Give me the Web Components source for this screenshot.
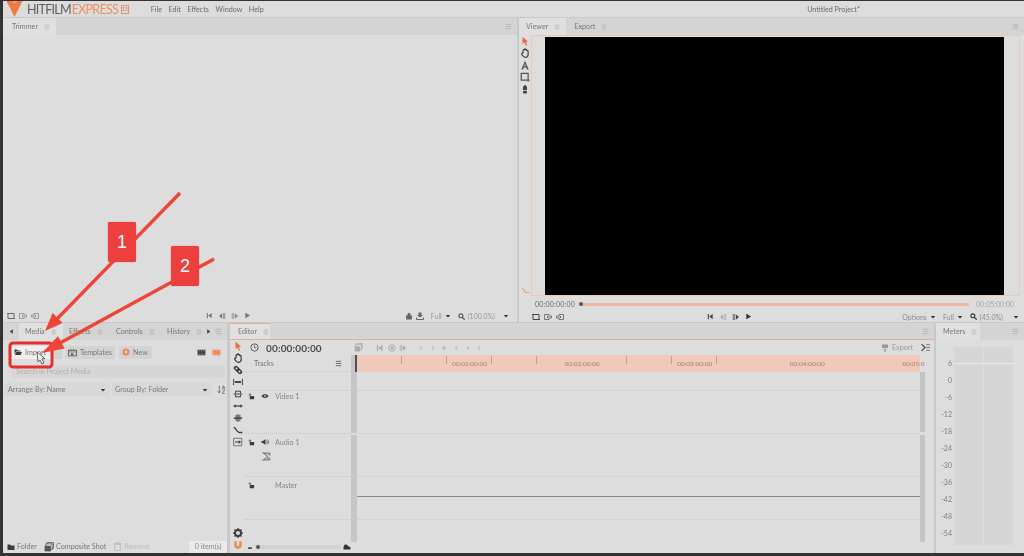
<!DOCTYPE html>
<html>
<head>
<meta charset="utf-8">
<title>HitFilm Express</title>
<style>
    html, body { margin: 0; height: 100%; overflow: hidden; background: #2b2b2b; }
    body { font-family: "Lato", "Liberation Sans", sans-serif; font-size: 7.2px; color: #6f6f6f; }
</style>
</head>
<body>

<hf-app>
    <hf-titlebar slot="title"></hf-titlebar>

    <!-- Upper row -->
    <hf-panel slot="trimmer" style="width:514px">
        <hf-tab slot="tabs" active label="Trimmer" style="padding:0 6px 0 9px"></hf-tab>
        <hf-trimmer></hf-trimmer>
    </hf-panel>
    <hf-panel slot="viewer" style="flex:1">
        <hf-tab slot="tabs" active label="Viewer" style="padding:0 6px 0 7px"></hf-tab>
        <hf-tab slot="tabs" label="Export"></hf-tab>
        <hf-viewer></hf-viewer>
    </hf-panel>

    <!-- Lower row -->
    <hf-panel slot="media" style="width:224px">
        <hf-icon slot="tabs" name="left" size="7" style="margin:0 4px 0 5px"></hf-icon>
        <hf-tab slot="tabs" active label="Media" w="44" style="padding:0 6px"></hf-tab>
        <hf-tab slot="tabs" label="Effects" w="47" style="padding:0 6px"></hf-tab>
        <hf-tab slot="tabs" label="Controls" w="51" style="padding:0 6px"></hf-tab>
        <hf-tab slot="tabs" label="History" w="44" style="padding:0 6px"></hf-tab>
        <hf-icon slot="tabs" name="right" size="7"></hf-icon>
        <hf-media></hf-media>
    </hf-panel>
    <hf-panel slot="editor" style="width:704px" accent>
        <hf-tab slot="tabs" active accent label="Editor" w="40"></hf-tab>
        <hf-editor></hf-editor>
    </hf-panel>
    <hf-panel slot="meters" style="flex:1">
        <hf-tab slot="tabs" active label="Meters" w="44" style="padding:0 7px"></hf-tab>
        <hf-meters></hf-meters>
    </hf-panel>
</hf-app>

<hf-callouts></hf-callouts>

<script>
// Icon shapes, all on a 16x16 box
const ICONS = {
    menu: `<path d="M2 3h12M2 8h12M2 13h12" stroke="currentColor" stroke-width="1.6" fill="none"/>`,
    left: `<path d="M11 3v10L4 8z"/>`,
    right: `<path d="M5 3v10l7-5z"/>`,
    down: `<path d="M2 5h12L8 12z"/>`,
    cursor: `<path d="M4 1l9 8-4 .5 2.500 5-2 1-2.500-5L4 13z"/>`,
    hand: `<path d="M5 7V3.500a1 1 0 012 0V2.500a1 1 0 012 0v1a1 1 0 012 0V5a1 1 0 012 0v5c0 3-2 5-4.500 5S5 13.500 3 10.500C2 9 3 8 4 8.500z" fill="none" stroke="currentColor" stroke-width="1.900"/>`,
    razor: `<g transform="rotate(-45 8 8)"><rect x="4.500" y="0" width="7" height="16" rx="3.500"/><rect x="6.800" y="3" width="2.400" height="3" fill="#ddd"/><rect x="6.800" y="10" width="2.400" height="3" fill="#ddd"/></g>`,
    slip: `<path d="M1 3v10M15 3v10" stroke="currentColor" stroke-width="1.500"/><path d="M3 6.500h10v3H3z"/>`,
    slide: `<path d="M1 8h14" stroke="currentColor" stroke-width="1.500"/><path d="M4 7V3.500h8V7M4 9v3.500h8V9" fill="none" stroke="currentColor" stroke-width="1.500"/>`,
    ripple: `<path d="M1 8h14" stroke="currentColor" stroke-width="2"/><path d="M1 8l3-3v6zM15 8l-3-3v6z"/>`,
    roll: `<path d="M1 8h14M8 2v12" stroke="currentColor" stroke-width="2"/><path d="M5 3v10M11 3v10" stroke="currentColor" stroke-width="1.500"/>`,
    rate: `<path d="M1 4c5 0 4 8 9 8h5" fill="none" stroke="currentColor" stroke-width="2.200"/>`,
    insert: `<path d="M1 2h13v12H1z" fill="none" stroke="currentColor" stroke-width="1"/><path d="M3 8h7" stroke="currentColor" stroke-width="1.600"/><path d="M9 5l4 3-4 3z"/>`,
    gear: `<circle cx="8" cy="8" r="4.800" fill="none" stroke="currentColor" stroke-width="3"/><path d="M8 0v3M8 13v3M0 8h3M13 8h3M2.300 2.300l2 2M11.700 11.700l2 2M13.700 2.300l-2 2M4.300 11.700l-2 2" stroke="currentColor" stroke-width="2"/>`,
    magnet: `<path d="M2 2h4v6a2 2 0 004 0V2h4v6a6 6 0 01-12 0z"/>`,
    clock: `<circle cx="8" cy="8" r="6.500" fill="none" stroke="currentColor" stroke-width="1.600"/><path d="M8 4v4.500h3.500" fill="none" stroke="currentColor" stroke-width="1.400"/>`,
    lock: `<path d="M2 1.500h5v5H5.500V3h-2v3.500H2z"/><rect x="4" y="7" width="10" height="7.500" rx="1"/>`,
    eye: `<path d="M1 8c3-5 11-5 14 0-3 5-11 5-14 0z"/><circle cx="8" cy="8" r="2" fill="#ddd"/><circle cx="8" cy="8" r="1"/>`,
    speaker: `<path d="M1 6h3l5-4v12l-5-4H1z"/><path d="M11 5c1.500 1.500 1.500 4.500 0 6M13 3c2.500 2.500 2.500 7.500 0 10" fill="none" stroke="currentColor" stroke-width="1.300"/>`,
    audiofx: `<path d="M1 2h14M1 14h14M3 2l7 6-7 6M9 11h6M11 5h4" fill="none" stroke="currentColor" stroke-width="1.300"/>`,
    folder: `<path d="M1 3h5l1.500 2H15v9H1z"/>`,
    folderopen: `<path d="M1 3h5l1.500 2H13v2H4L1 13z"/><path d="M4.500 8H16l-3 6H1.800z"/>`,
    loop: `<path d="M2 3h12v10H2z" fill="none" stroke="currentColor" stroke-width="2"/><path d="M0 3h4M12 13h4" stroke="currentColor" stroke-width="2"/>`,
    markin: `<path d="M1 3h9v3h5v4h-5v3H1z" fill="none" stroke="currentColor" stroke-width="1.300"/><path d="M6 6l4 2-4 2z"/>`,
    markout: `<path d="M15 3H6v3H1v4h5v3h9z" fill="none" stroke="currentColor" stroke-width="1.300"/><path d="M10 6L6 8l4 2z"/>`,
    first: `<path d="M3 2v12" stroke="currentColor" stroke-width="2.500"/><path d="M13 2v12L5 8z"/>`,
    prev: `<path d="M8 3v10L2 8z"/><path d="M10.500 2v12M13.500 2v12" stroke="currentColor" stroke-width="1.500"/>`,
    next: `<path d="M8 3v10l6-5z"/><path d="M2.500 2v12M5.500 2v12" stroke="currentColor" stroke-width="1.500"/>`,
    play: `<path d="M3 1.500v13L14 8z"/>`,
    search: `<circle cx="6.500" cy="6.500" r="4.500" fill="none" stroke="currentColor" stroke-width="2.500"/><path d="M10 10l5 5" stroke="currentColor" stroke-width="3"/>`,
    nodes: `<path d="M8 1l3 3v3h3v8H2V7h3V4z"/>`,
    snapshot: `<path d="M5 7V2h6v5h3l-6 5-6-5z" transform="translate(0 -1)"/><path d="M1 11v4h14v-4" fill="none" stroke="currentColor" stroke-width="2"/>`,
    zoomsmall: `<path d="M3 9h10v4H3z"/>`,
    zoombig: `<path d="M1 8c2-5 3-5 5-5s3 2 4 3 5 1 5 4v3H1z"/>`,
    templates: `<rect x="1" y="4" width="14" height="10" fill="none" stroke="currentColor" stroke-width="1.500"/><path d="M4 1l2 3M9 1l2 3M1 7h14M6 9l4 2-4 2z" stroke="currentColor" fill="currentColor"/>`,
    newitem: `<circle cx="8" cy="8" r="7"/><path d="M9.500 4L5 8l4.500 4z" fill="#e8e8e8"/>`,
    film: `<rect x="1" y="3" width="14" height="10"/><path d="M3 5h2M7 5h2M11 5h2M3 11h2M7 11h2M11 11h2" stroke="#ddd" stroke-width="1"/>`,
    sort: `<path d="M4 1v13M1.500 11L4 14l2.500-3" fill="none" stroke="currentColor" stroke-width="1.300"/><path d="M9 7l2.500-6L14 7M10 5h3M9 9h5l-5 6h5" fill="none" stroke="currentColor" stroke-width="1.100"/>`,
    composite: `<rect x="5" y="1" width="10" height="9" fill="none" stroke="currentColor" stroke-width="1.300"/><rect x="3" y="3" width="10" height="9" fill="#ddd" stroke="currentColor" stroke-width="1.300"/><rect x="1" y="6" width="10" height="9"/>`,
    trash: `<path d="M3 4h10v11H3zM1 3h14M6 1h4" fill="none" stroke="currentColor" stroke-width="1.300"/>`,
    record: `<circle cx="8" cy="8" r="6.500" fill="none" stroke="currentColor" stroke-width="1.800"/><circle cx="8" cy="8" r="3"/>`,
    export: `<path d="M2 1h12v7H2z"/><path d="M8 8v7M5 11l3 4 3-4" fill="none" stroke="currentColor" stroke-width="1.600"/>`,
    expand: `<path d="M1 2l6 6-6 6" fill="none" stroke="currentColor" stroke-width="2.500"/><path d="M9 3h7M9 8h7M9 13h7" stroke="currentColor" stroke-width="1.300"/>`,
    text: `<path d="M8 1L2 15h3l1-3h4l1 3h3zM8 6l1.300 4H6.700z" fill-rule="evenodd"/>`,
    mask: `<path d="M2 2h11v11H2z" fill="none" stroke="currentColor" stroke-width="2"/><path d="M12 12h3v3h-3z"/>`,
    pen: `<path d="M8 1c3 2 4 5 3 9H5C4 6 5 3 8 1zM5 11h6v4H5z"/>`,
    diamond: `<path d="M8 2l6 6-6 6-6-6z"/>`,
    bar: `<path d="M6 4h4v8H6z"/>`
};

// Small wrapper so icons can be dropped in anywhere by name
class HfIcon extends HTMLElement {
    connectedCallback() {
        const size = this.getAttribute("size") || 9;
        const color = this.getAttribute("color") || "#3c3c3c";
        if (!this.shadowRoot) this.attachShadow({mode: "open"});
        this.shadowRoot.innerHTML = `
            <style>
                :host { display: inline-flex; flex: none; width: ${size}px; height: ${size}px; color: ${color}; }
                svg { width: 100%; height: 100%; fill: currentColor; display: block; }
            </style>
            <svg viewBox="0 0 16 16">${ICONS[this.getAttribute("name")] || ""}</svg>`;
    }
}
customElements.define("hf-icon", HfIcon);


const appTemplate = document.createElement("template");
appTemplate.innerHTML = `
<style>
    :host { display: flex; flex-direction: column; width: 1024px; height: 556px; box-sizing: border-box;
            padding: 1px 0 3px 3px; background: #c9c9c9; position: relative;
            filter: blur(.45px); box-shadow: inset 3px 0 0 #333, inset 0 -3px 0 #333, inset 0 1px 0 #333; }
    .upper { display: flex; height: 304px; gap: 2px; margin-top: 1px; }
    .lower { display: flex; flex: 1; gap: 3px; margin-top: 1px; min-height: 0; }
    ::slotted([slot="meters"]) { margin-left: -1px; }
</style>
<slot name="title"></slot>
<div class="upper"><slot name="trimmer"></slot><slot name="viewer"></slot></div>
<div class="lower"><slot name="media"></slot><slot name="editor"></slot><slot name="meters"></slot></div>
`;

class HfApp extends HTMLElement {
    constructor() {
        super();
        this.attachShadow({mode: "open"});
        this.shadowRoot.appendChild(appTemplate.content.cloneNode(true));
    }
}
customElements.define("hf-app", HfApp);


const titleTemplate = document.createElement("template");
titleTemplate.innerHTML = `
<style>
    :host { display: flex; align-items: center; height: 16px; background: #dcdcdc; color: #6a6a6a; font-size: 7.2px; }
    svg { width: 17px; height: 16px; margin-left: 3px; flex: none; }
    .brand { font-size: 12.500px; letter-spacing: -.75px; margin-left: 4px; color: #5e5e5e; white-space: nowrap; }
    .brand b { font-weight: 400; color: #ed9163; margin-left: 1px; }
    .ver { border: 1px solid #ed9163; color: #c4794f; font-size: 5px; padding: 0; margin-left: 3px; line-height: 7px; }
    nav { display: flex; gap: 6.500px; margin-left: 22px; }
    .project { margin-left: auto; margin-right: 164px; }
</style>
<svg viewBox="0 0 16 16"><path d="M0 0h16L8 16z" fill="#ee7b3f"/><path d="M5.500 0h5L8 3z" fill="#f3a173"/></svg>
<span class="brand">HITFILM<b>EXPRESS</b></span><span class="ver">15</span>
<nav><span>File</span><span>Edit</span><span>Effects</span><span>Window</span><span>Help</span></nav>
<span class="project">Untitled Project*</span>
`;

class HfTitlebar extends HTMLElement {
    constructor() {
        super();
        this.attachShadow({mode: "open"});
        this.shadowRoot.appendChild(titleTemplate.content.cloneNode(true));
    }
}
customElements.define("hf-titlebar", HfTitlebar);


const panelTemplate = document.createElement("template");
panelTemplate.innerHTML = `
<style>
    :host { display: flex; flex-direction: column; background: #dddddd; min-width: 0; }
    .tabs { display: flex; align-items: center; height: 17px; flex: none; padding-right: 5px; box-sizing: border-box;
            background: #d4d4d4 radial-gradient(#cbcbcb 30%, transparent 35%) 0 0 / 2px 2px; }
    :host([accent]) .tabs { border-bottom: 1px solid #eeaa8c; }
    .end { margin-left: auto; }
    .body { flex: 1; display: flex; min-height: 0; }
    ::slotted(:not([slot])) { flex: 1; min-width: 0; }
</style>
<div class="tabs"><slot name="tabs"></slot><hf-icon class="end" name="menu" size="7" color="#a9a9a9"></hf-icon></div>
<div class="body"><slot></slot></div>
`;

class HfPanel extends HTMLElement {
    constructor() {
        super();
        this.attachShadow({mode: "open"});
        this.shadowRoot.appendChild(panelTemplate.content.cloneNode(true));
    }
}
customElements.define("hf-panel", HfPanel);


class HfTab extends HTMLElement {
    connectedCallback() {
        const width = this.getAttribute("w");
        const label = this.getAttribute("label");
        if (!this.shadowRoot) this.attachShadow({mode: "open"});
        this.shadowRoot.innerHTML = `
            <style>
                :host { display: flex; align-items: center; gap: 6px; height: 100%; box-sizing: border-box; flex: none;
                        padding: 0 8px; color: #777; font-size: 7.2px; ${width ? `width:${width}px;` : ""} }
                :host([active]) { background: #e0e0e0; }
                :host([accent]) { border-top: 1px solid #eeaa8c; }
            </style>
            ${label}<hf-icon name="menu" size="6" color="#a9a9a9"></hf-icon>`;
    }
}
customElements.define("hf-tab", HfTab);


const trimmerTemplate = document.createElement("template");
trimmerTemplate.innerHTML = `
<style>
    :host { display: flex; flex-direction: column; justify-content: flex-end; }
    .controls { display: flex; align-items: center; height: 12px; padding: 0 8px 0 4px; color: #9a9a9a; font-size: 7px; }
    .left { display: flex; gap: 4px; width: 199px; }
    .mid { display: flex; gap: 5px; }
    .right { display: flex; align-items: center; gap: 3px; margin-left: auto; }
    .s { margin-right: 4px; }
</style>
<div class="controls">
    <div class="left">
        <hf-icon name="loop" size="8" color="#666"></hf-icon>
        <hf-icon name="markin" size="8" color="#777"></hf-icon>
        <hf-icon name="markout" size="8" color="#777"></hf-icon>
    </div>
    <div class="mid">
        <hf-icon name="first" size="7" color="#777"></hf-icon>
        <hf-icon name="prev" size="8" color="#777"></hf-icon>
        <hf-icon name="next" size="8" color="#888"></hf-icon>
        <hf-icon name="play" size="7" color="#777"></hf-icon>
    </div>
    <div class="right">
        <hf-icon name="nodes" size="8" color="#666"></hf-icon>
        <hf-icon class="s" name="snapshot" size="8" color="#666"></hf-icon>
        <span>Full</span><hf-icon class="s" name="down" size="6" color="#333"></hf-icon>
        <hf-icon name="search" size="7" color="#555"></hf-icon>
        <span>(100.0%)</span>
        <hf-icon name="down" size="6" color="#333" style="margin-left:5px"></hf-icon>
    </div>
</div>
`;

class HfTrimmer extends HTMLElement {
    constructor() {
        super();
        this.attachShadow({mode: "open"});
        this.shadowRoot.appendChild(trimmerTemplate.content.cloneNode(true));
    }
}
customElements.define("hf-trimmer", HfTrimmer);


const viewerTemplate = document.createElement("template");
viewerTemplate.innerHTML = `
<style>
    :host { display: flex; flex-direction: column; }
    .stage { display: flex; height: 261px; flex: none; }
    .tools { display: flex; flex-direction: column; align-items: center; gap: 2px; width: 12px; flex: none; padding-top: 1px; }
    .tools .foot { margin-top: auto; margin-bottom: 1px; }
    .frame { display: flex; flex: 1; border: 1px solid #f0c8b6; padding: 1px 15px 0 13px; margin-right: 4px; }
    .screen { flex: 1; background: #000; }
    .scrub { display: flex; align-items: center; gap: 7px; height: 14px; margin-top: 1px; padding: 0 10px 0 16px; font-size: 7px; letter-spacing: .2px; }
    .bar { flex: 1; height: 3px; background: #efb8a2; position: relative; }
    .bar::before { content: ""; position: absolute; left: -3px; top: -.5px; width: 4px; height: 4px; border-radius: 50%; background: #555; }
    .muted { color: #a5a5a5; letter-spacing: 0; }
    .controls { display: flex; align-items: center; height: 11px; padding: 0 5px 0 13px; font-size: 7px; color: #8c8c8c; }
    .left { display: flex; gap: 4px; width: 175px; }
    .mid { display: flex; gap: 5px; }
    .right { display: flex; align-items: center; gap: 3px; margin-left: auto; }
    .s { margin-right: 4px; }
</style>
<div class="stage">
    <div class="tools">
        <hf-icon name="cursor" size="10" color="#ee6a3a"></hf-icon>
        <hf-icon name="hand" size="10" color="#444"></hf-icon>
        <hf-icon name="text" size="10" color="#555"></hf-icon>
        <hf-icon name="mask" size="10" color="#555"></hf-icon>
        <hf-icon name="pen" size="10" color="#444"></hf-icon>
        <hf-icon class="foot" name="rate" size="9" color="#ee9a78"></hf-icon>
    </div>
    <div class="frame"><div class="screen"></div></div>
</div>
<div class="scrub"><span>00:00:00:00</span><div class="bar"></div><span class="muted">00:05:00:00</span></div>
<div class="controls">
    <div class="left">
        <hf-icon name="loop" size="8" color="#444"></hf-icon>
        <hf-icon name="markin" size="8" color="#444"></hf-icon>
        <hf-icon name="markout" size="8" color="#444"></hf-icon>
    </div>
    <div class="mid">
        <hf-icon name="first" size="7" color="#444"></hf-icon>
        <hf-icon name="prev" size="8" color="#aaa"></hf-icon>
        <hf-icon name="next" size="8" color="#444"></hf-icon>
        <hf-icon name="play" size="7" color="#333"></hf-icon>
    </div>
    <div class="right">
        <span>Options</span><hf-icon class="s" name="down" size="6" color="#333"></hf-icon>
        <span>Full</span><hf-icon class="s" name="down" size="6" color="#333"></hf-icon>
        <hf-icon name="search" size="7" color="#333"></hf-icon>
        <span>(45.0%)</span>
        <hf-icon name="down" size="6" color="#333" style="margin-left:7px"></hf-icon>
    </div>
</div>
`;

class HfViewer extends HTMLElement {
    constructor() {
        super();
        this.attachShadow({mode: "open"});
        this.shadowRoot.appendChild(viewerTemplate.content.cloneNode(true));
    }
}
customElements.define("hf-viewer", HfViewer);


const mediaTemplate = document.createElement("template");
mediaTemplate.innerHTML = `
<style>
    :host { display: flex; flex-direction: column; font-size: 7.2px; color: #777; }
    .buttons { display: flex; align-items: center; gap: 3px; padding: 5px 6px 0 7px; height: 14px; }
    .btn { display: flex; align-items: center; gap: 3px; height: 13px; padding: 0 3px; background: #d3d3d3; box-sizing: border-box; }
    .btn.import { background: linear-gradient(90deg, #f0f0f0 78%, #d3d3d3 78%); width: 52px; padding-left: 4px; }
    .tpl { width: 50px; } .new { width: 33px; margin-left: 1px; }
    .views { display: flex; gap: 6px; margin-left: auto; }
    .search { height: 13px; margin: 6px 2px 0 8px; padding-left: 5px; display: flex; align-items: center; background: #d6d6d6; color: #b0b0b0; }
    .sorts { display: flex; align-items: center; gap: 2px; margin: 5px 0 0 2px; height: 13px; }
    .sel { display: flex; align-items: center; justify-content: space-between; height: 13px; background: #d8d8d8; padding: 0 4px 0 3px; box-sizing: border-box; }
    .sel.a { width: 105px; } .sel.b { width: 100px; }
    .list { flex: 1; }
    .foot { display: flex; align-items: center; height: 13px; padding-left: 4px; }
    .foot hf-icon { margin-right: 2px; }
    .foot span { margin-right: 7px; }
    .foot .off { color: #bbb; }
    .count { margin-left: auto; width: 38px; height: 12px; background: #eaeaea; display: flex; align-items: center; justify-content: center; color: #888; }
</style>
<div class="buttons">
    <div class="btn import"><hf-icon name="folderopen" size="8"></hf-icon>Import</div>
    <div class="btn tpl"><hf-icon name="templates" size="9" color="#555"></hf-icon>Templates</div>
    <div class="btn new"><hf-icon name="newitem" size="8" color="#ee8a55"></hf-icon>New</div>
    <div class="views"><hf-icon name="film" size="9" color="#444"></hf-icon><hf-icon name="film" size="9" color="#ee8a55"></hf-icon></div>
</div>
<div class="search">Search in Project Media</div>
<div class="sorts">
    <div class="sel a">Arrange By: Name<hf-icon name="down" size="6" color="#333"></hf-icon></div>
    <div class="sel b">Group By: Folder<hf-icon name="down" size="6" color="#333"></hf-icon></div>
    <hf-icon name="sort" size="9" color="#555" style="margin-left:3px"></hf-icon>
</div>
<div class="list"></div>
<div class="foot">
    <hf-icon name="folder" size="8"></hf-icon><span>Folder</span>
    <hf-icon name="composite" size="10" color="#555"></hf-icon><span>Composite Shot</span>
    <hf-icon name="trash" size="9" color="#b5b5b5"></hf-icon><span class="off">Remove</span>
    <div class="count">0 item(s)</div>
</div>
`;

class HfMedia extends HTMLElement {
    constructor() {
        super();
        this.attachShadow({mode: "open"});
        this.shadowRoot.appendChild(mediaTemplate.content.cloneNode(true));
    }
}
customElements.define("hf-media", HfMedia);


const editorTemplate = document.createElement("template");
editorTemplate.innerHTML = `
<style>
    :host { display: flex; font-size: 7.2px; color: #777; }
    .tools { display: flex; flex-direction: column; align-items: center; gap: 2px; width: 14px; flex: none; padding-top: 1px; margin-left: 1px; }
    .tools .gap { margin-top: auto; }
    .tools .last { margin-bottom: 3px; }
    .main { flex: 1; display: flex; flex-direction: column; min-width: 0; }
    .top { display: flex; align-items: center; height: 15px; flex: none; }
    .clock { display: flex; align-items: center; gap: 7px; width: 106px; padding-left: 5px; box-sizing: border-box; flex: none; }
    .clock b { font-size: 10px; letter-spacing: .15px; color: #4c4c4c; font-weight: 700; }
    .transport { display: flex; align-items: center; color: #bbb; padding-left: 3px; }
    .group { display: flex; align-items: center; gap: 3.500px; margin-left: 13px; }
    .group.small { gap: 5.700px; margin-left: 11px; }
    .export { margin-left: auto; display: flex; align-items: center; gap: 3px; color: #999; margin-right: 4px; }
    .grid { display: flex; flex: 1; min-height: 0; }
    .heads { width: 106px; flex: none; display: flex; flex-direction: column; }
    .head { display: flex; align-items: center; height: 17px; padding: 0 9px; border-bottom: 1px dotted #ccc; box-sizing: border-box; }
    .head hf-icon { margin-left: auto; }
    .spacer { height: 19px; border-bottom: 1px dotted #ccc; box-sizing: border-box; }
    .track { border-bottom: 1px dotted #c8c8c8; box-sizing: border-box; height: 43px; padding-left: 3px; }
    .line { display: flex; align-items: center; gap: 6px; height: 10px; }
    .line span { color: #888; }
    .blank { width: 8px; }
    .fx { margin: 5px 0 0 14px; }
    .split { width: 6px; flex: none; margin-bottom: 11px;
             background: linear-gradient(#4f4f4f, #4f4f4f) right 0 / 2px 17px no-repeat,
                         linear-gradient(#dddddd, #dddddd) 0 78px / 100% 2px no-repeat, #c6c6c6; }
    .time { flex: 1; display: flex; flex-direction: column; min-width: 0; }
    .ruler { display: flex; height: 17px; flex: none; align-items: center; padding-left: 95px; color: #a17f72; font-size: 6.5px;
             background: repeating-linear-gradient(90deg, transparent 0 22px, #cf9f8c 22px 22.500px) 0 1px / 100% 8px no-repeat, #efc9ba; }
    .ruler span { width: 112.600px; flex: none; white-space: nowrap; }
    .ruler span:last-child { width: auto; }
    .lane { border-bottom: 1px dotted #ccc; box-sizing: border-box; }
    .master { border-bottom: 1px solid #888; }
    .scroll { width: 5px; flex: none; margin: 17px 9px 11px 0;
              background: linear-gradient(#dddddd, #dddddd) 0 60px / 100% 3px no-repeat, #c4c4c4; }
    .hscroll { height: 13px; flex: none; display: flex; align-items: center; gap: 2px; padding-left: 2px; margin-top: -1px; }
    .slider { width: 86px; height: 4px; background: #d2d2d2; position: relative; }
    .slider::before { content: ""; position: absolute; left: 1px; top: 0; width: 4px; height: 4px; border-radius: 50%; background: #555; }
</style>
<div class="tools">
    <hf-icon name="cursor" size="10" color="#ee6a3a"></hf-icon>
    <hf-icon name="hand" size="10"></hf-icon>
    <hf-icon name="razor" size="10"></hf-icon>
    <hf-icon name="slip" size="10"></hf-icon>
    <hf-icon name="slide" size="10"></hf-icon>
    <hf-icon name="ripple" size="10"></hf-icon>
    <hf-icon name="roll" size="10"></hf-icon>
    <hf-icon name="rate" size="10"></hf-icon>
    <hf-icon name="insert" size="10"></hf-icon>
    <hf-icon class="gap" name="gear" size="10"></hf-icon>
    <hf-icon class="last" name="magnet" size="10" color="#ee8a55"></hf-icon>
</div>
<div class="main">
    <div class="top">
        <div class="clock"><hf-icon name="clock" size="9" color="#555"></hf-icon><b>00:00:00:00</b></div>
        <div class="transport">
            <hf-icon name="composite" size="9" color="#aaa"></hf-icon>
            <div class="group">
                <hf-icon name="first" size="8" color="#aaa"></hf-icon>
                <hf-icon name="record" size="8" color="#aaa"></hf-icon>
                <hf-icon name="next" size="8" color="#aaa"></hf-icon>
            </div>
            <div class="group small">
                <hf-icon name="bar" size="6" color="#bbb"></hf-icon>
                <hf-icon name="bar" size="6" color="#bbb"></hf-icon>
                <hf-icon name="diamond" size="6" color="#bbb"></hf-icon>
                <hf-icon name="left" size="6" color="#bbb"></hf-icon>
                <hf-icon name="right" size="6" color="#bbb"></hf-icon>
                <hf-icon name="bar" size="6" color="#bbb"></hf-icon>
            </div>
        </div>
        <div class="export"><hf-icon name="export" size="8" color="#999"></hf-icon>Export<hf-icon name="expand" size="9" color="#555" style="margin-left:5px"></hf-icon></div>
    </div>
    <div class="grid">
        <div class="heads">
            <div class="head">Tracks<hf-icon name="menu" size="7"></hf-icon></div>
            <div class="spacer"></div>
            <div class="track">
                <div class="line"><hf-icon name="lock" size="7"></hf-icon><hf-icon name="eye" size="8"></hf-icon><span>Video 1</span></div>
            </div>
            <div class="track" style="padding-top:3px">
                <div class="line"><hf-icon name="lock" size="7"></hf-icon><hf-icon name="speaker" size="8"></hf-icon><span>Audio 1</span></div>
                <hf-icon class="fx" name="audiofx" size="9"></hf-icon>
            </div>
            <div class="track" style="padding-top:3px">
                <div class="line"><hf-icon name="lock" size="7"></hf-icon><div class="blank"></div><span>Master</span></div>
            </div>
            <div style="flex:1"></div>
            <div class="hscroll"><hf-icon name="zoomsmall" size="6" color="#333"></hf-icon><div class="slider"></div><hf-icon name="zoombig" size="8" color="#333"></hf-icon></div>
        </div>
        <div class="split"></div>
        <div class="time">
            <div class="ruler"><span>00:01:00:00</span><span>00:02:00:00</span><span>00:03:00:00</span><span>00:04:00:00</span><span>00:05:0</span></div>
            <div class="lane" style="height:19px"></div>
            <div class="lane" style="height:43px"></div>
            <div class="lane" style="height:43px"></div>
            <div class="lane master" style="height:20px"></div>
            <div class="lane" style="height:23px"></div>
        </div>
        <div class="scroll"></div>
    </div>
</div>
`;

class HfEditor extends HTMLElement {
    constructor() {
        super();
        this.attachShadow({mode: "open"});
        this.shadowRoot.appendChild(editorTemplate.content.cloneNode(true));
    }
}
customElements.define("hf-editor", HfEditor);


const metersTemplate = document.createElement("template");
metersTemplate.innerHTML = `
<style>
    :host { display: flex; padding: 7px 11px 8px 0; font-size: 7px; color: #808080; }
    .scale { width: 18px; padding: 8px 2px 0 0; box-sizing: border-box; text-align: right; display: flex; flex-direction: column; }
    .scale span { height: 17px; line-height: 17px; flex: none; }
    .bars { flex: 1; display: flex; gap: 1px; }
    .bar { flex: 1; background: linear-gradient(#ececec, #ececec) 0 16px / 100% 1px no-repeat,
                                radial-gradient(#cdcdcd 30%, transparent 35%) 0 0 / 2px 2px, #d6d6d6; }
</style>
<div class="scale"></div>
<div class="bars"><div class="bar"></div><div class="bar"></div></div>
`;

class HfMeters extends HTMLElement {
    constructor() {
        super();
        this.attachShadow({mode: "open"});
        this.shadowRoot.appendChild(metersTemplate.content.cloneNode(true));

        // dB scale, top to bottom
        const scale = this.shadowRoot.querySelector(".scale");
        for (let db = 6; db >= -54; db -= 6) {
            const label = document.createElement("span");
            label.textContent = db;
            scale.appendChild(label);
        }
    }
}
customElements.define("hf-meters", HfMeters);


// Red arrows and numbered badges drawn over the screenshot
const calloutTemplate = document.createElement("template");
calloutTemplate.innerHTML = `
<style>
    :host { position: absolute; left: 0; top: 0; width: 1024px; height: 556px; pointer-events: none; font-family: "Liberation Sans", sans-serif; }
    svg { position: absolute; left: 0; top: 0; }
    .badge { position: absolute; width: 28px; height: 40px; background: #ee3f3f; color: #fff; border-radius: 2px;
             display: flex; align-items: center; justify-content: center; font-size: 18px; box-shadow: 0 0 1px #a33; }
</style>
<svg width="1024" height="556" viewBox="0 0 1024 556">
    <rect x="10" y="343" width="42" height="24" rx="3" fill="none" stroke="#e62e2e" stroke-width="3"/>
    <path d="M37 352l1 10 2-2 2 4 2-1-2-4 3-.5z" fill="#eee" stroke="#444" stroke-width=".8"/>
    <g stroke="#ef4438" stroke-width="3.400" fill="none">
        <path d="M180 193L56 320"/>
        <path d="M214 259L60 343"/>
    </g>
    <path d="M45 331L52.600 313 62.600 323z" fill="#ef4438"/>
    <path d="M42 353L57.900 336.300 64.700 348.500z" fill="#ef4438"/>
</svg>
<div class="badge" style="left:108px;top:222px">1</div>
<div class="badge" style="left:171px;top:246px">2</div>
`;

class HfCallouts extends HTMLElement {
    constructor() {
        super();
        this.attachShadow({mode: "open"});
        this.shadowRoot.appendChild(calloutTemplate.content.cloneNode(true));
    }
}
customElements.define("hf-callouts", HfCallouts);
</script>
</body>
</html>
